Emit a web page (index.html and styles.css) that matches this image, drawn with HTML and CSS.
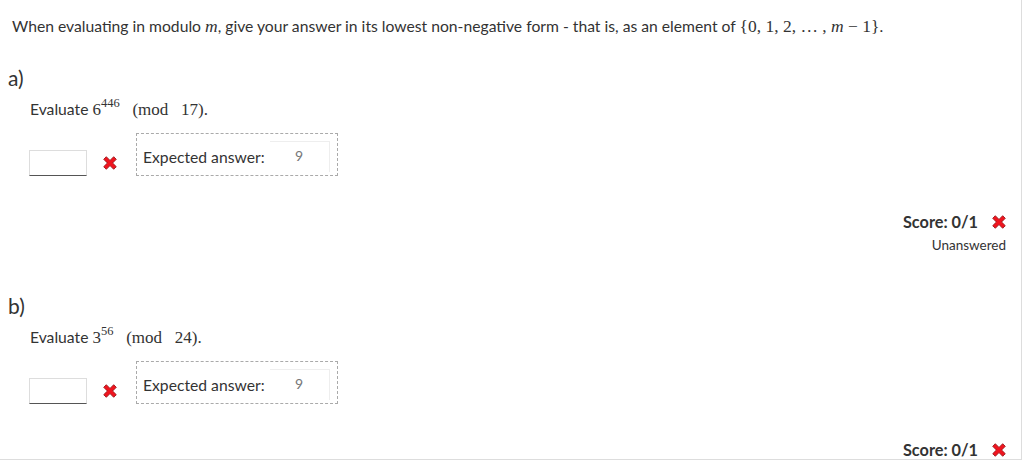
FILE: index.html
```html
<!DOCTYPE html>
<html lang="en">
<head>
    <meta charset="UTF-8">
    <title>Question</title>
    <link rel="stylesheet" href="styles.css">
</head>
<body>
    <div class="question">
        <p class="statement">When evaluating in modulo <span class="math"><i>m</i></span>, give your answer in its lowest non-negative form - that is, as an element of <span class="math">{0, 1, 2, &hellip; , <i>m</i> &minus; 1}</span>.</p>

        <div class="part">
            <h3 class="part-name">a)</h3>
            <p class="prompt">Evaluate <span class="math">6<sup>446</sup>&nbsp;&nbsp;&nbsp;(mod&nbsp;&nbsp;&nbsp;17).</span></p>
            <div class="answer-row">
                <input class="answer" type="text">
                <svg class="cross" width="14" height="14" viewBox="0 0 14 14"><path d="M3.3 0.7 L7 4.4 L10.7 0.7 L13.3 3.3 L9.6 7 L13.3 10.7 L10.7 13.3 L7 9.6 L3.3 13.3 L0.7 10.7 L4.4 7 L0.7 3.3 Z" fill="#f0141e" stroke="#8e0c10" stroke-width="0.8" stroke-linejoin="round"/></svg>
                <div class="expected">
                    <span>Expected answer:</span>
                    <span class="expected-value">9</span>
                </div>
            </div>
            <div class="score">
                <div class="score-line">Score: 0/1 <svg class="cross" width="14" height="14" viewBox="0 0 14 14"><path d="M3.3 0.7 L7 4.4 L10.7 0.7 L13.3 3.3 L9.6 7 L13.3 10.7 L10.7 13.3 L7 9.6 L3.3 13.3 L0.7 10.7 L4.4 7 L0.7 3.3 Z" fill="#f0141e" stroke="#8e0c10" stroke-width="0.8" stroke-linejoin="round"/></svg></div>
                <div class="feedback">Unanswered</div>
            </div>
        </div>

        <div class="part">
            <h3 class="part-name">b)</h3>
            <p class="prompt">Evaluate <span class="math">3<sup>56</sup>&nbsp;&nbsp;&nbsp;(mod&nbsp;&nbsp;&nbsp;24).</span></p>
            <div class="answer-row">
                <input class="answer" type="text">
                <svg class="cross" width="14" height="14" viewBox="0 0 14 14"><path d="M3.3 0.7 L7 4.4 L10.7 0.7 L13.3 3.3 L9.6 7 L13.3 10.7 L10.7 13.3 L7 9.6 L3.3 13.3 L0.7 10.7 L4.4 7 L0.7 3.3 Z" fill="#f0141e" stroke="#8e0c10" stroke-width="0.8" stroke-linejoin="round"/></svg>
                <div class="expected">
                    <span>Expected answer:</span>
                    <span class="expected-value">9</span>
                </div>
            </div>
            <div class="score">
                <div class="score-line">Score: 0/1 <svg class="cross" width="14" height="14" viewBox="0 0 14 14"><path d="M3.3 0.7 L7 4.4 L10.7 0.7 L13.3 3.3 L9.6 7 L13.3 10.7 L10.7 13.3 L7 9.6 L3.3 13.3 L0.7 10.7 L4.4 7 L0.7 3.3 Z" fill="#f0141e" stroke="#8e0c10" stroke-width="0.8" stroke-linejoin="round"/></svg></div>
            </div>
        </div>
    </div>
</body>
</html>
```

FILE: styles.css
```css
body {
    margin: 0;
    font-family: Lato, "Open Sans", sans-serif;
    font-size: 15.7px;
    color: #333;
    background-color: #fff;
}
.question {
    width: 1021px;
    height: 459px;
    border-right: 1px solid #ddd;
    border-bottom: 1px solid #ddd;
    overflow: hidden;
}
.statement {
    margin: 0;
    padding: 16px 0 0 12px;
    line-height: 20px;
}
.math {
    font-family: "Liberation Serif", serif;
    font-size: 17.5px;
}
.math i {
    font-style: italic;
}
.part-name {
    margin: 0;
    padding: 30px 0 0 8px;
    font-size: 21px;
    font-weight: normal;
    line-height: 24px;
}
.prompt {
    margin: 8px 0 0 30px;
    line-height: 22px;
}
.prompt .math {
    font-size: 17px;
}
.prompt sup {
    font-size: 12.5px;
    vertical-align: 8px;
    line-height: 0;
}
.answer-row {
    display: flex;
    align-items: flex-end;
    margin: 12px 0 0 29px;
}
.answer {
    width: 58px;
    height: 26px;
    box-sizing: border-box;
    border: 1px solid #ddd;
    border-bottom: 1px solid #555;
    margin: 0 16px 0 0;
}
.cross {
    display: inline-block;
    margin-bottom: 6px;
}
.answer-row .cross {
    margin-right: 19px;
}
.expected {
    display: flex;
    align-items: center;
    border: 1px dashed #aaa;
    padding: 6px 7px 2px 6px;
    height: 33px;
}
.expected-value {
    width: 60px;
    height: 31px;
    box-sizing: border-box;
    border: 1px solid #eee;
    border-left: none;
    border-bottom: none;
    color: #777;
    font-size: 14px;
    margin-left: 5px;
    padding: 5px 0 0 0;
    text-align: center;
}
.score {
    text-align: right;
    padding-right: 15px;
    margin-top: 36px;
    margin-bottom: 10px;
}
.score-line {
    font-weight: bold;
    font-size: 16.3px;
    line-height: 20px;
}
.score-line .cross {
    margin: 0 0 -1px 10px;
    vertical-align: baseline;
}
.feedback {
    font-size: 13.5px;
    line-height: 18px;
    margin-top: 4px;
}
```
